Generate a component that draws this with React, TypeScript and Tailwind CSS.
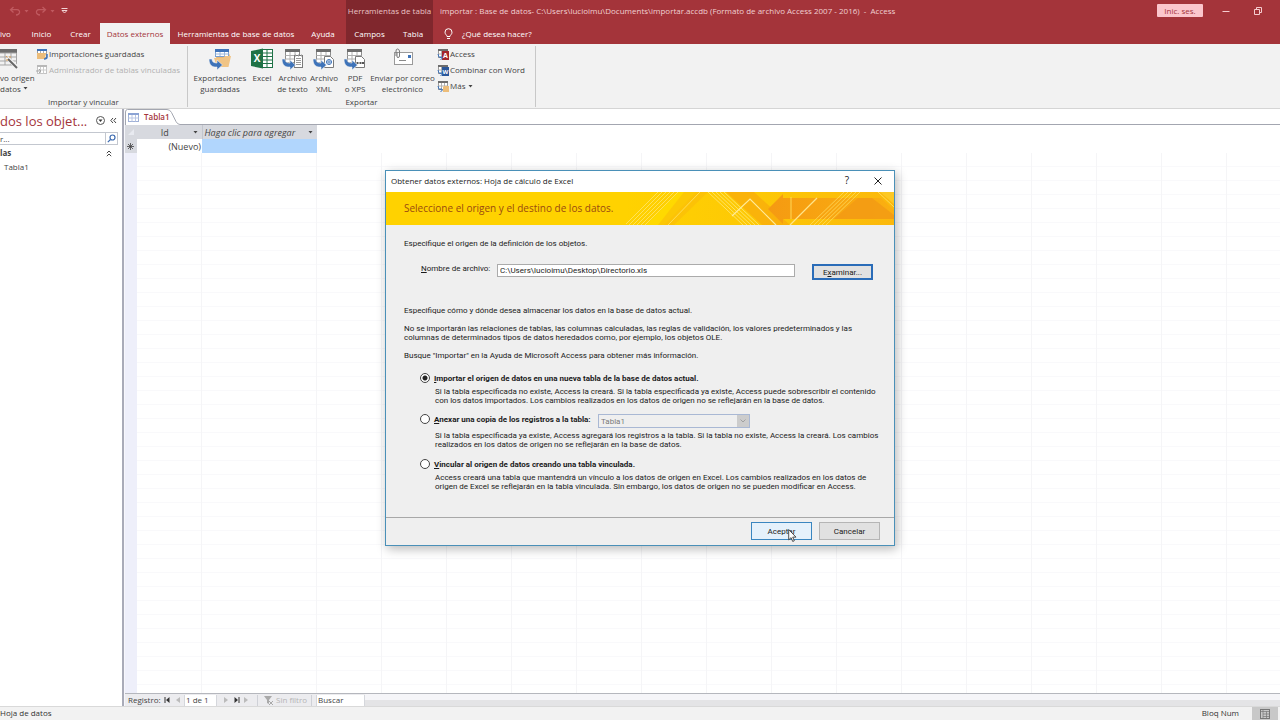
import React, { useState } from 'react';

// Иконки ленты
function GridSheet({ header = '#6d6d6d' }: { header?: string }) {
  return (
    <g>
      <rect x="3.5" y="1.5" width="14" height="13" fill="#fff" stroke="#8c8c8c" />
      <rect x="3" y="1" width="15" height="3" fill={header} />
      <path d="M3.5 7.5h14M3.5 11h14M8 4v10.500M13 4v10.500" stroke="#b0b0b0" fill="none" />
    </g>
  );
}

function ExportArrow() {
  return (
    <path
      d="M0 11h3c0 3 2 4 5 4v-3l5.500 5-5.500 5v-3C3 19.500 0 17 0 11z"
      fill="#3e73b9"
      stroke="#f2f2f2"
      strokeWidth=".6"
    />
  );
}

function ExportIcon({ kind }: { kind: string }) {
  return (
    <svg className="w-[22px] h-[22px]" viewBox="0 0 22 22" aria-hidden="true">
      {kind === 'saved' && (
        <g>
          <path d="M7 8.500h4l1-2h9l-2 9.500H8z" fill="#e9b872" />
          <rect x="6.500" y="1.500" width="13" height="7" fill="#fff" stroke="#7aa0d0" />
          <rect x="6" y="1" width="14" height="3" fill="#3e73b9" />
          <path d="M6.500 6h13M11 4v4M15.500 4v4" stroke="#9cb8dc" />
          <path d="M5 10h9l2-2h6l-2.500 11H8z" fill="#f0c485" />
          <ExportArrow />
        </g>
      )}
      {kind === 'excel' && (
        <g>
          <rect x="9.500" y="1.500" width="12" height="18" fill="#fff" stroke="#1f7246" />
          <path d="M10 5h11M10 8.500h11M10 12h11M10 15.500h11M16 2v17" stroke="#1f7246" fill="none" />
          <path d="M0 3l12-2.500v20L0 18z" fill="#1f7246" />
          <text x="6" y="14" textAnchor="middle" fontSize="10" fontWeight="700" fill="#fff">X</text>
        </g>
      )}
      {kind === 'text' && (
        <g>
          <GridSheet />
          <rect x="12.500" y="7.500" width="8" height="12" fill="#fff" stroke="#7a7a7a" />
          <path d="M14 10.500h5M14 12.500h5M14 14.500h5M14 16.500h5M13.500 6.500v2M16.500 6.500v2M19.500 6.500v2" stroke="#9a9a9a" />
          <ExportArrow />
        </g>
      )}
      {kind === 'xml' && (
        <g>
          <GridSheet />
          <path d="M11.500 8.500h6l3 3v8h-9z" fill="#fff" stroke="#7a7a7a" />
          <circle cx="16" cy="14" r="2.500" fill="none" stroke="#3e73b9" />
          <path d="M13 14h6M16 11.500v5" stroke="#3e73b9" strokeWidth=".8" />
          <ExportArrow />
        </g>
      )}
      {kind === 'pdf' && (
        <g>
          <GridSheet />
          <path d="M11.500 8.500h6l3 3v8h-9z" fill="#fff" stroke="#7a7a7a" />
          <path d="M12.500 15h2M15.500 15h2M18 15h2" stroke="#555" strokeWidth="2" />
          <ExportArrow />
        </g>
      )}
      {kind === 'mail' && (
        <g>
          <rect x="2.500" y="4.500" width="18" height="12" fill="#fff" stroke="#9a9a9a" />
          <rect x="16" y="7" width="3" height="3" fill="#3e73b9" />
          <path d="M7 12.500h7" stroke="#8a8a8a" />
          <path d="M4 8V3q0-2 1.500-2T7.500 3v5q0 1.500-1.500 1.500T5 8V4" fill="none" stroke="#7a7a7a" />
        </g>
      )}
      {kind === 'source' && (
        <g>
          <path d="M0 1h17v4H0z" fill="#6d6d6d" />
          <path d="M0 5h16.500v12H0M0 9h16M0 13h16M5 5v12M11 5v12" fill="none" stroke="#a5a5a5" />
          <path d="M7 10l11 10" stroke="#f2f2f2" strokeWidth="4" />
          <path d="M8 11l9 9" stroke="#666" strokeWidth="2" />
          <path d="M6 8l1.500 1.500M10 8v2M6 12h2" stroke="#e0a050" />
        </g>
      )}
    </svg>
  );
}

function SmallIcon({ kind }: { kind: string }) {
  const gray = kind === 'manager';
  return (
    <svg className="w-3 h-3 shrink-0" viewBox="0 0 12 12" aria-hidden="true">
      <rect x="1.500" y="1.500" width="9" height="8" fill="#fff" stroke={gray ? '#c4c4c4' : '#9a9a9a'} />
      <rect x="1" y="1" width="10" height="2" fill={gray ? '#b8b8b8' : kind === 'saved' ? '#3e73b9' : '#6d6d6d'} />
      <path d="M1.500 6h9M4.500 3v6.500M7.500 3v6.500" stroke={gray ? '#cccccc' : '#b0b0b0'} />
      {gray && <path d="M0 7h4M3 5l2 2-2 2" fill="none" stroke="#a8a8a8" />}
      {kind === 'saved' && (
        <g>
          <path d="M1 5h9l-1 6H1z" fill="#ecbd7a" />
          <path d="M11 6v3q0 2-3 2" fill="none" stroke="#3e73b9" strokeWidth="1.500" />
        </g>
      )}
      {kind === 'access' && (
        <g>
          <rect x="5" y="3" width="7" height="9" fill="#a4262c" />
          <text x="8.500" y="10" textAnchor="middle" fontSize="7" fontWeight="700" fill="#fff">A</text>
        </g>
      )}
      {kind === 'word' && (
        <g>
          <rect x="5" y="3" width="7" height="9" fill="#2b579a" />
          <text x="8.500" y="10" textAnchor="middle" fontSize="6" fontWeight="700" fill="#fff">W</text>
        </g>
      )}
      {kind === 'more' && <path d="M6 7l1-1h5v6H6z" fill="#ecbd7a" />}
      {!gray && kind !== 'saved' && <path d="M1 6q0 4 4 4M3.500 8l2 2-2 2" fill="none" stroke="#3e73b9" />}
    </svg>
  );
}

function Caret() {
  return (
    <svg className="inline-block w-[5px] h-[3px] shrink-0" viewBox="0 0 5 3" aria-hidden="true">
      <path d="M0.500 0h4L2.500 2.500z" fill="currentColor" />
    </svg>
  );
}

interface BigButtonProps {
  kind: string;
  lines: [string, string];
  width: string;
}

function BigButton({ kind, lines, width }: BigButtonProps) {
  return (
    <button type="button" className={`flex flex-col items-center shrink-0 whitespace-nowrap leading-[11px] ${width}`}>
      <ExportIcon kind={kind} />
      <span className="mt-[2px]">{lines[0]}</span>
      <span>{lines[1]}</span>
    </button>
  );
}

const exportButtons: BigButtonProps[] = [
  { kind: 'saved', lines: ['Exportaciones', 'guardadas'], width: 'w-[54px]' },
  { kind: 'excel', lines: ['Excel', ''], width: 'w-[30px]' },
  { kind: 'text', lines: ['Archivo', 'de texto'], width: 'w-[31px]' },
  { kind: 'xml', lines: ['Archivo', 'XML'], width: 'w-[32px]' },
  { kind: 'pdf', lines: ['PDF', 'o XPS'], width: 'w-[30px]' },
  { kind: 'mail', lines: ['Enviar por correo', 'electrónico'], width: 'w-[65px]' },
];

function Header() {
  return (
    <header className="flex h-11 bg-[#a4343a] text-white text-[8px] whitespace-nowrap">
      <div className="w-[346px] shrink-0 flex flex-col">
        <div className="h-[23px] flex items-center pl-[9px] pb-[1px] text-[#c05a60]">
          <button type="button" aria-label="Deshacer" className="flex items-center gap-[3px]">
            <svg className="w-3 h-[10px]" viewBox="0 0 12 10" fill="none" stroke="currentColor" strokeWidth="1.300">
              <path d="M4.500 1L1.500 3.700l3 2.800M1.500 3.700H8q3 .3 2.500 3Q10 9 7 9" />
            </svg>
            <Caret />
          </button>
          <button type="button" aria-label="Rehacer" className="flex items-center gap-[3px] ml-[6px]">
            <svg className="w-3 h-[10px]" viewBox="0 0 12 10" fill="none" stroke="currentColor" strokeWidth="1.300">
              <path d="M7.500 1l3 2.700-3 2.800M10.500 3.700H4q-3 .3-2.500 3Q2 9 5 9" />
            </svg>
            <Caret />
          </button>
          <button type="button" aria-label="Personalizar barra de acceso rápido" className="ml-[6px] text-[#f3d5d6]">
            <svg className="w-[7px] h-[6px]" viewBox="0 0 7 6" fill="none" stroke="currentColor">
              <path d="M0.500 0.500h6M1 2.500h5L3.500 5z" />
            </svg>
          </button>
        </div>
        <nav className="h-[21px] flex">
          <button type="button" className="w-[22px] text-left">ivo</button>
          <button type="button" className="w-[39px]">Inicio</button>
          <button type="button" className="w-[39px]">Crear</button>
          <button type="button" className="w-[70px] bg-[#f2f2f2] text-[#a4343a]">Datos externos</button>
          <button type="button" className="w-[132px]">Herramientas de base de datos</button>
          <button type="button" className="w-[42px]">Ayuda</button>
        </nav>
      </div>
      <div className="w-[87px] shrink-0 flex flex-col bg-[#80272d]">
        <div className="h-[23px] flex items-center justify-center pb-[1px] text-[#eac3c5]">Herramientas de tabla</div>
        <nav className="h-[21px] flex">
          <button type="button" className="w-[47px]">Campos</button>
          <button type="button" className="w-10">Tabla</button>
        </nav>
      </div>
      <div className="flex-1 min-w-0 flex flex-col">
        <div className="h-[23px] flex items-center pl-[7px] pr-[18px] pb-[2px] text-[#f0d0d2]">
          <h1 className="flex-1 whitespace-pre">
            {'importar : Base de datos- C:\\Users\\lucioimu\\Documents\\importar.accdb (Formato de archivo Access 2007 - 2016)  -  Access'}
          </h1>
          <button type="button" className="w-[46px] h-[13px] leading-[13px] bg-[#fbc6cc] text-[#a4343a] rounded-[1px]">Inic. ses.</button>
          <button type="button" aria-label="Minimizar" className="ml-[19px]">
            <svg className="w-2 h-2" viewBox="0 0 8 8"><path d="M0.500 4.500h7" stroke="#f6cdd0" /></svg>
          </button>
          <button type="button" aria-label="Restaurar" className="ml-6">
            <svg className="w-2 h-2" viewBox="0 0 8 8" fill="none" stroke="#f6cdd0">
              <path d="M0.500 2.500h5v5h-5zM2.500 2.500v-2h5v5h-2" />
            </svg>
          </button>
        </div>
        <div className="h-[21px] flex items-center pl-[11px]">
          <button type="button" className="flex items-center gap-[9px]">
            <svg className="w-[9px] h-3" viewBox="0 0 9 12" fill="none" stroke="currentColor">
              <path d="M3 8.500C3 7 1 6.500 1 4.200a3.500 3.500 0 0 1 7 0C8 6.500 6 7 6 8.500zM3 10.500h3" />
            </svg>
            ¿Qué desea hacer?
          </button>
        </div>
      </div>
    </header>
  );
}

function Ribbon() {
  return (
    <div className="h-[65px] flex bg-[#f2f2f2] border-b border-[#d5d5d5] pt-[2px] pb-[1px] text-[8px] text-[#444444] whitespace-nowrap">
      <section className="w-[188px] shrink-0 flex flex-col border-r border-[#c8c8c8]">
        <div className="flex-1 flex">
          <button type="button" className="w-9 flex flex-col items-start leading-[11px] pt-[2px]">
            <ExportIcon kind="source" />
            <span className="mt-[2px]">vo origen</span>
            <span className="flex items-center gap-[2px]">datos <Caret /></span>
          </button>
          <div className="flex flex-col">
            <button type="button" className="h-4 flex items-center gap-[1px]">
              <SmallIcon kind="saved" /> Importaciones guardadas
            </button>
            <button type="button" disabled className="h-4 flex items-center gap-[1px] text-[#b1b1b1]">
              <SmallIcon kind="manager" /> Administrador de tablas vinculadas
            </button>
          </div>
        </div>
        <div className="h-[11px] leading-[11px] pl-[48px]">Importar y vincular</div>
      </section>
      <section className="w-[348px] shrink-0 flex flex-col border-r border-[#c8c8c8]">
        <div className="flex-1 flex pl-[5px]">
          <div className="flex pt-[2px]">
            {exportButtons.map((b) => (
              <BigButton key={b.kind} {...b} />
            ))}
          </div>
          <div className="flex flex-col pl-[2px]">
            <button type="button" className="h-4 flex items-center gap-[1px]"><SmallIcon kind="access" /> Access</button>
            <button type="button" className="h-4 flex items-center gap-[1px]"><SmallIcon kind="word" /> Combinar con Word</button>
            <button type="button" className="h-4 flex items-center gap-[1px]">
              <SmallIcon kind="more" />
              <span className="mr-[2px]">Más</span>
              <Caret />
            </button>
          </div>
        </div>
        <div className="h-[11px] leading-[11px] text-center">Exportar</div>
      </section>
    </div>
  );
}

function NavigationPane() {
  return (
    <aside className="w-[124px] shrink-0 flex flex-col bg-white border-r-2 border-[#a9abb8] text-[8px] text-[#444444]">
      <div className="h-[23px] flex items-center whitespace-nowrap">
        <h2 className="w-[95px] text-[13px] leading-[18px] text-[#a4343a]">dos los objet...</h2>
        <button type="button" aria-label="Opciones del panel">
          <svg className="w-[11px] h-[11px]" viewBox="0 0 11 11">
            <circle cx="5.500" cy="5.500" r="4" fill="none" stroke="#555" />
            <path d="M3.500 4.500h4l-2 2.500z" fill="#333" />
          </svg>
        </button>
        <button type="button" aria-label="Contraer panel" className="ml-1">
          <svg className="w-[7px] h-[7px]" viewBox="0 0 7 7" fill="none" stroke="#444">
            <path d="M3 1L.8 3.500 3 6M6 1L3.800 3.500 6 6" />
          </svg>
        </button>
      </div>
      <div className="h-[13px] mr-1 flex border-y border-r border-[#c3c7cf]">
        <input type="text" aria-label="Buscar objetos" defaultValue="r..." className="flex-1 min-w-0 outline-none" />
        <button type="button" aria-label="Buscar" className="w-3 flex items-center justify-center border-l border-[#c3c7cf]">
          <svg className="w-[9px] h-[9px]" viewBox="0 0 9 9" fill="none" stroke="#3b6ab0" strokeWidth="1.200">
            <circle cx="5.500" cy="3.500" r="2.500" />
            <path d="M3.500 5.500L.8 8.200" />
          </svg>
        </button>
      </div>
      <button type="button" className="h-4 flex items-center justify-between pr-[10px] font-bold">
        las
        <svg className="w-[6px] h-[7px]" viewBox="0 0 6 7" fill="none" stroke="#444">
          <path d="M.8 3.200L3 1l2.200 2.200M.8 6.200L3 4l2.200 2.200" />
        </svg>
      </button>
      <a href="#tabla1" className="h-[13px] leading-[12px] pl-1">Tabla1</a>
    </aside>
  );
}

const emptyColumns = Array.from({ length: 15 });

function Datasheet() {
  return (
    <div className="flex-1 flex flex-col bg-white">
      <div className="flex-1 flex flex-col bg-[linear-gradient(90deg,#eeeffa_12px,transparent_12px)]">
        <table className="border-collapse table-fixed w-[192px] text-[9px] text-[#444444]">
          <colgroup>
            <col className="w-3" />
            <col className="w-[65px]" />
            <col className="w-[115px]" />
          </colgroup>
          <thead>
            <tr className="h-[14px] bg-[#d7d9df] leading-[13px]">
              <th className="p-0" aria-label="Seleccionar todo">
                <svg className="w-2 h-2 ml-[2px]" viewBox="0 0 8 8"><path d="M7 1v6H1z" fill="#e8eaf0" /></svg>
              </th>
              <th className="p-0 font-normal border-r border-[#c3c6ce]">
                <div className="flex items-center pr-1">
                  <span className="flex-1 text-center">Id</span>
                  <Caret />
                </div>
              </th>
              <th className="p-0 font-normal italic text-left">
                <div className="flex items-center justify-between pl-[2px] pr-1 whitespace-nowrap">
                  Haga clic para agregar
                  <Caret />
                </div>
              </th>
            </tr>
          </thead>
          <tbody>
            <tr className="h-[14px] leading-[13px]">
              <td className="p-0 bg-[#d7d9df]">
                <svg className="w-[7px] h-[7px] ml-[2px]" viewBox="0 0 7 7" stroke="#444" strokeWidth=".8">
                  <path d="M3.500 0v7M0 3.500h7M1 1l5 5M6 1L1 6" />
                </svg>
              </td>
              <td className="p-0 pr-[1px] text-right bg-white">(Nuevo)</td>
              <td className="p-0 bg-[#b1d6fd]" />
            </tr>
          </tbody>
        </table>
        {/* Пустая сетка */}
        <div className="flex-1 ml-3 flex bg-[repeating-linear-gradient(180deg,transparent_0px,transparent_13px,#f9f9fb_13px,#f9f9fb_14px)]">
          <div className="w-[65px] shrink-0 border-r border-[#f5f5f7]" />
          <div className="w-[115px] shrink-0 border-r border-[#f5f5f7]" />
          <div className="flex-1 min-w-0 flex overflow-hidden">
            {emptyColumns.map((_, index) => (
              <div key={index} className="w-[65px] shrink-0 border-r border-[#f5f5f7]" />
            ))}
          </div>
        </div>
      </div>
      <div className="h-[13px] flex items-center border-t border-[#b5b7bd] bg-[#ececef] pl-[3px] text-[8px] text-[#444444] whitespace-nowrap">
        <span className="w-9">Registro:</span>
        <button type="button" aria-label="Primer registro" className="w-3">
          <svg className="w-[6px] h-[6px]" viewBox="0 0 6 6"><path d="M.5 0h1v6h-1zM5.500 0v6L2 3z" fill="#333" /></svg>
        </button>
        <button type="button" aria-label="Registro anterior" disabled className="w-2">
          <svg className="w-1 h-[6px]" viewBox="0 0 4 6"><path d="M4 0v6L0 3z" fill="#bbb" /></svg>
        </button>
        <input type="text" aria-label="Registro actual" defaultValue="1 de 1" className="w-[33px] h-[11px] pl-[1px] bg-white border-x border-[#d5d7dc] outline-none" />
        <button type="button" aria-label="Registro siguiente" disabled className="ml-[7px] w-[10px]">
          <svg className="w-1 h-[6px]" viewBox="0 0 4 6"><path d="M0 0v6l4-3z" fill="#bbb" /></svg>
        </button>
        <button type="button" aria-label="Último registro" className="w-[10px]">
          <svg className="w-[6px] h-[6px]" viewBox="0 0 6 6"><path d="M4.500 0h1v6h-1zM.5 0v6L4 3z" fill="#333" /></svg>
        </button>
        <button type="button" aria-label="Nuevo registro" disabled className="w-[13px]">
          <svg className="w-1 h-[6px]" viewBox="0 0 4 6"><path d="M0 0v6l4-3z" fill="#bbb" /></svg>
        </button>
        <button type="button" disabled className="h-[11px] w-[55px] flex items-center gap-[3px] border-x border-[#cfd1d7] pl-[6px] text-[#b5b5b5]">
          <svg className="w-[9px] h-[9px] shrink-0" viewBox="0 0 9 9">
            <path d="M0 0h8L5 4v4L3 7V4z" fill="#a9a9a9" />
            <path d="M5 5l4 4M9 5L5 9" stroke="#a9a9a9" />
          </svg>
          Sin filtro
        </button>
        <input type="text" aria-label="Buscar" defaultValue="Buscar" className="ml-1 w-[49px] h-[11px] pl-[1px] bg-white border-x border-[#d5d7dc] outline-none" />
        <div className="flex-1 self-stretch bg-[linear-gradient(180deg,#f5f5f8_50%,#e4e4e6_50%)]" />
      </div>
    </div>
  );
}

function DocumentArea() {
  return (
    <main className="flex-1 min-w-0 flex flex-col pl-[1px] bg-[#f7f7fc]">
      <div className="h-4 flex bg-white">
        <button type="button" className="relative w-[55px] flex items-center gap-[5px] pl-[3px] text-[8px] font-semibold text-[#a4343a]">
          <svg className="w-[11px] h-[9px] shrink-0" viewBox="0 0 11 9">
            <rect x=".5" y=".5" width="10" height="8" fill="#fff" stroke="#9fb0d6" />
            <path d="M0 0h11v2H0z" fill="#8ba3d4" />
            <path d="M.5 5h10M4 2v6.500M7.500 2v6.500" stroke="#b9c6e4" />
          </svg>
          Tabla1
          <svg className="absolute inset-0 w-full h-full" viewBox="0 0 55 16" fill="none" stroke="#a3a6b0">
            <path d="M0.500 16V3q0-2.500 2-2.500H42q3 0 4.500 3l4.500 9q1.500 3 4 3" />
          </svg>
        </button>
        <div className="flex-1 border-b border-[#a3a6b0]" />
      </div>
      <Datasheet />
    </main>
  );
}

function BannerArt() {
  return (
    <svg className="w-[268px] h-full" viewBox="0 0 268 33" preserveAspectRatio="none" aria-hidden="true">
      <defs>
        <linearGradient id="gold" x1="0" x2="1">
          <stop offset="0" stopColor="#ffd200" />
          <stop offset=".5" stopColor="#fdc806" />
          <stop offset="1" stopColor="#fbb80c" />
        </linearGradient>
        <linearGradient id="amber" x1="0" x2="1">
          <stop offset="0" stopColor="#f59a12" />
          <stop offset="1" stopColor="#fbb010" />
        </linearGradient>
      </defs>
      <rect width="268" height="33" fill="url(#gold)" />
      <path d="M52 0h18L38 33H20z" fill="#ffe000" opacity=".6" />
      <path d="M58 0h24L48 33H32z" fill="#f9b80a" opacity=".5" />
      <path d="M100 0h28l36 33h-28z" fill="#f8a90d" opacity=".7" />
      <path d="M142 17l15-15v4h98l13 12v9H157v5z" fill="url(#amber)" />
      <path d="M208 27l24-21h14l22 17v4z" fill="#f39a14" opacity=".8" />
      <path d="M236 0h18l14 12V0z" fill="#fdd236" opacity=".6" />
      <path
        d="M32 0L-1 33M36 0L3 33M40 0L7 33M44 0L11 33M48 0L15 33M52 0L19 33"
        stroke="#ffe97a"
        strokeWidth=".8"
        opacity=".9"
      />
      <path
        d="M82 0l35 33M86 0l35 33M90 0l35 33M94 0l35 33M98 0l35 33"
        stroke="#ffe97a"
        strokeWidth=".8"
      />
      <path
        d="M218 0l-34 33M222 0l-34 33M226 0l-34 33M230 0l-34 33M234 0l-34 33"
        stroke="#ffdc60"
        strokeWidth=".8"
      />
      <path d="M74 0L42 33M165 5v22M252 0l16 15" stroke="#ffdf60" strokeWidth=".9" />
      <path d="M106 24l18-17 26 26" fill="none" stroke="#ffeb9a" strokeWidth="1.200" />
      <path d="M191 6l-27 27" stroke="#ffe48a" strokeWidth="1.200" />
    </svg>
  );
}

interface RadioProps {
  id: string;
  value: string;
  selected: string;
  onSelect: (value: string) => void;
}

function Radio({ id, value, selected, onSelect }: RadioProps) {
  return (
    <input
      id={id}
      type="radio"
      name="destino"
      checked={selected === value}
      onChange={() => onSelect(value)}
      className="appearance-none w-[10px] h-[10px] shrink-0 rounded-full border border-[#444444] bg-white checked:bg-[radial-gradient(circle,#222222_2px,#ffffff_3px)]"
    />
  );
}

function ImportDialog() {
  const [option, setOption] = useState('importar');

  return (
    <div
      role="dialog"
      aria-labelledby="dialog-title"
      className="w-[510px] flex flex-col border border-[#4a90b8] bg-[#efefef] shadow-[2px_3px_10px_rgba(0,0,0,0.28)] text-[#1a1a1a] font-['Roboto',sans-serif] text-[8px] leading-[9px] whitespace-nowrap"
    >
      <div className="h-[21px] flex items-center bg-white pl-[5px] pr-3 pb-[2px] font-['Open_Sans',sans-serif] text-[#222222]">
        <h2 id="dialog-title" className="flex-1">Obtener datos externos: Hoja de cálculo de Excel</h2>
        <button type="button" aria-label="Ayuda" className="text-[10px] w-[10px]">?</button>
        <button type="button" aria-label="Cerrar" className="ml-[22px]">
          <svg className="w-2 h-2" viewBox="0 0 8 8" stroke="#222"><path d="M.5.500l7 7M7.500.500l-7 7" /></svg>
        </button>
      </div>
      <div className="h-[33px] flex items-center justify-between bg-[#ffd200] pl-[18px] font-['Open_Sans',sans-serif] text-[10px] text-[#9a4a10]">
        <span className="shrink-0">Seleccione el origen y el destino de los datos.</span>
        <div className="h-full flex"><BannerArt /></div>
      </div>

      <div className="pl-[18px] pr-[21px] pt-[14px] pb-[26px]">
        <p>Especifique el origen de la definición de los objetos.</p>
        <div className="mt-4 h-4 flex items-start">
          <label htmlFor="archivo" className="ml-[17px] w-[76px]"><u>N</u>ombre de archivo:</label>
          <input
            id="archivo"
            type="text"
            defaultValue="C:\Users\lucioimu\Desktop\Directorio.xls"
            className="w-[298px] h-[13px] pl-[2px] bg-white border border-[#ababab] outline-none"
          />
          <button type="button" className="ml-[17px] w-[61px] h-4 bg-[#e1e1e1] border-2 border-[#2a6cb8]">
            E<u>x</u>aminar...
          </button>
        </div>
        <p className="mt-[26px]">Especifique cómo y dónde desea almacenar los datos en la base de datos actual.</p>
        <p className="mt-[9px]">
          No se importarán las relaciones de tablas, las columnas calculadas, las reglas de validación, los valores predeterminados y las
          <br />
          columnas de determinados tipos de datos heredados como, por ejemplo, los objetos OLE.
        </p>
        <p className="mt-[9px]">Busque "Importar" en la Ayuda de Microsoft Access para obtener más información.</p>

        <div className="mt-[13px] pl-4">
          <div className="h-[10px] flex items-center gap-1 font-bold">
            <Radio id="importar" value="importar" selected={option} onSelect={setOption} />
            <label htmlFor="importar"><u>I</u>mportar el origen de datos en una nueva tabla de la base de datos actual.</label>
          </div>
          <p className="mt-1 pl-[15px]">
            Si la tabla especificada no existe, Access la creará. Si la tabla especificada ya existe, Access puede sobrescribir el contenido
            <br />
            con los datos importados. Los cambios realizados en los datos de origen no se reflejarán en la base de datos.
          </p>

          <div className="mt-[9px] h-[14px] flex items-start gap-1">
            <Radio id="anexar" value="anexar" selected={option} onSelect={setOption} />
            <label htmlFor="anexar" className="w-[160px] leading-[11px] font-bold"><u>A</u>nexar una copia de los registros a la tabla:</label>
            <div className="w-[152px] h-[14px] flex border border-[#a9b8d4] bg-[#efefef]">
              <select
                aria-label="Tabla de destino"
                disabled={option !== 'anexar'}
                className="flex-1 appearance-none pl-[2px] bg-[#efefef] text-[#7a7a7a]"
              >
                <option>Tabla1</option>
              </select>
              <span className="w-3 flex items-center justify-center bg-[#cccccc]">
                <svg className="w-[6px] h-1" viewBox="0 0 6 4" fill="none" stroke="#a0a0a0"><path d="M.5.500L3 3l2.500-2.500" /></svg>
              </span>
            </div>
          </div>
          <p className="mt-[3px] pl-[15px]">
            Si la tabla especificada ya existe, Access agregará los registros a la tabla. Si la tabla no existe, Access la creará. Los cambios
            <br />
            realizados en los datos de origen no se reflejarán en la base de datos.
          </p>

          <div className="mt-[10px] h-[10px] flex items-center gap-1 font-bold">
            <Radio id="vincular" value="vincular" selected={option} onSelect={setOption} />
            <label htmlFor="vincular"><u>V</u>incular al origen de datos creando una tabla vinculada.</label>
          </div>
          <p className="mt-1 pl-[15px]">
            Access creará una tabla que mantendrá un vínculo a los datos de origen en Excel. Los cambios realizados en los datos de
            <br />
            origen de Excel se reflejarán en la tabla vinculada. Sin embargo, los datos de origen no se pueden modificar en Access.
          </p>
        </div>
      </div>

      <div className="flex justify-end gap-[7px] border-t border-[#a8a8a8] pt-1 pb-[5px] pr-[14px]">
        <button type="button" className="relative w-[61px] h-[18px] bg-[#e5f1fb] border border-[#3a86c0]">
          Aceptar
          <svg className="absolute left-[36px] top-[6px] w-[9px] h-[13px]" viewBox="0 0 8 12" aria-hidden="true">
            <path d="M.5.500v9.500l2.200-2L4.200 11.500l1.500-.7L4.200 7.500h3z" fill="#fff" stroke="#333" strokeWidth=".8" />
          </svg>
        </button>
        <button type="button" className="w-[61px] h-[18px] bg-[#e1e1e1] border border-[#b5b5b5]">Cancelar</button>
      </div>
    </div>
  );
}

function StatusBar() {
  return (
    <footer className="h-[14px] flex bg-[#f2f2f2] border-t border-[#d9d9d9] text-[8px] leading-[11px] text-[#333333]">
      <span className="flex-1">Hoja de datos</span>
      <span>Bloq Num</span>
      <button type="button" aria-label="Vista Hoja de datos" className="ml-[13px] mr-[2px] w-[26px] flex items-center justify-center bg-[#c8c8c8]">
        <svg className="w-[10px] h-[10px]" viewBox="0 0 10 10" fill="none" stroke="#777">
          <rect x=".5" y=".5" width="9" height="9" />
          <path d="M.5 2.500h9M3 .5v9M3 5h6.500M3 7.500h6.500M6.500 2.500v7" strokeWidth=".7" />
        </svg>
      </button>
    </footer>
  );
}

export default function App() {
  return (
    <div className="relative min-h-screen flex flex-col bg-[#f2f2f2] overflow-hidden font-['Open_Sans',sans-serif]">
      <Header />
      <Ribbon />
      <div className="flex-1 flex">
        <NavigationPane />
        <DocumentArea />
      </div>
      <StatusBar />

      {/* Модальное окно импорта */}
      <div className="absolute inset-0 flex items-start justify-center pt-[170px]">
        <ImportDialog />
      </div>
    </div>
  );
}
